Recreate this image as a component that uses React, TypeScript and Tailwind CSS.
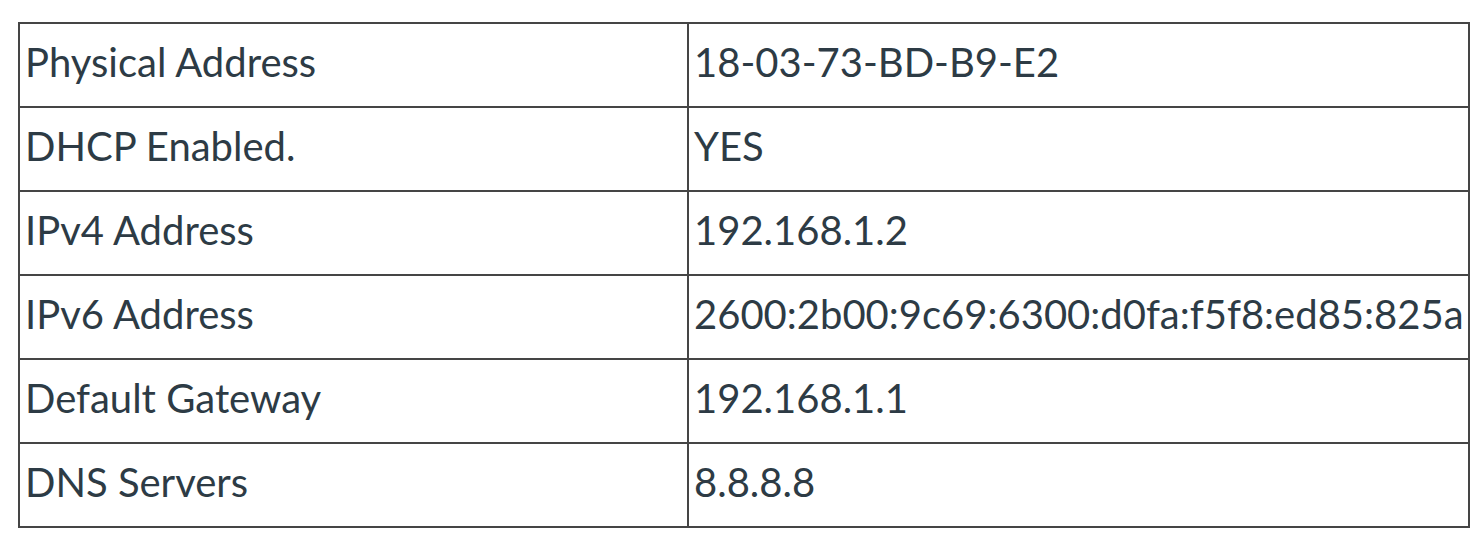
import React from "react";

const rows: [string, string][] = [
  ["Physical Address", "18-03-73-BD-B9-E2"],
  ["DHCP Enabled.", "YES"],
  ["IPv4 Address", "192.168.1.2"],
  ["IPv6 Address", "2600:2b00:9c69:6300:d0fa:f5f8:ed85:825a"],
  ["Default Gateway", "192.168.1.1"],
  ["DNS Servers", "8.8.8.8"],
];

export default function App() {
  return (
    <div className="bg-white w-[1482px] h-[548px] pt-[22px] pl-[18px] font-['Lato','Liberation_Sans',sans-serif] text-[#2d3b45]">
      <table className="border-collapse w-[1452px] border-2 border-[#454545]">
        <tbody>
          {rows.map(([k, v]) => (
            <tr key={k} className="h-[84px]">
              <td className="w-[669px] border-2 border-[#454545] pl-[5px] pr-0 pt-0 pb-[6px] text-[40px] leading-[1.2] align-middle">{k}</td>
              <td className="border-2 border-[#454545] pl-[5px] pr-0 pt-0 pb-[6px] text-[40px] leading-[1.2] align-middle whitespace-nowrap">{v}</td>
            </tr>
          ))}
        </tbody>
      </table>
    </div>
  );
}
